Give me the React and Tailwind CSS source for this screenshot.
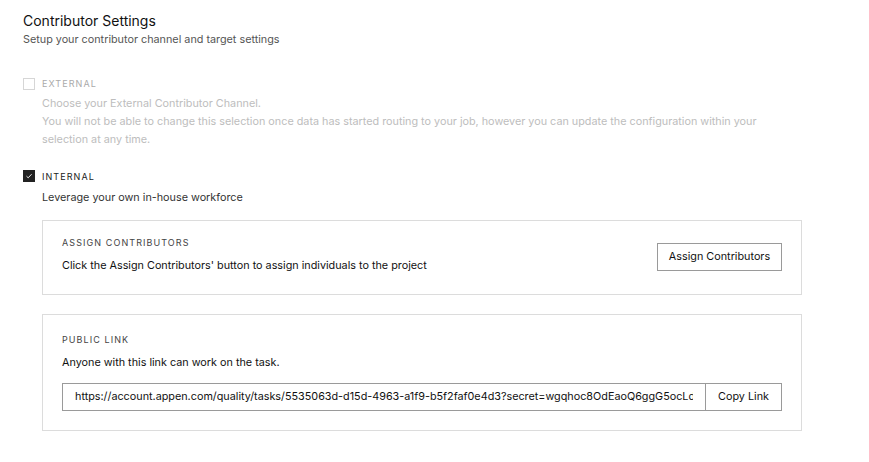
import React from "react";

const url =
  "https://account.appen.com/quality/tasks/5535063d-d15d-4963-a1f9-b5f2faf0e4d3?secret=wgqhoc8OdEaoQ6ggG5ocLdTq2";

function Check({ checked }) {
  if (checked) {
    return (
      <span className="flex h-3 w-3 items-center justify-center bg-[#222]">
        <svg width="8" height="8" viewBox="0 0 8 8" fill="none">
          <path d="M1.5 4.2 3.2 5.8 6.6 2.2" stroke="#fff" strokeWidth="0.9" />
        </svg>
      </span>
    );
  }
  return <span className="h-3 w-3 border border-[#d6d6d6] bg-white" />;
}

export default function App() {
  return (
    <div className="min-h-[462px] bg-white px-[23px] pt-[12px] font-['Inter',sans-serif] text-[#222]">
      <h1 className="text-[14px] leading-[18px] text-[#111]">Contributor Settings</h1>
      <p className="mt-[2px] text-[10.8px] leading-[16px] text-[#555]">
        Setup your contributor channel and target settings
      </p>

      {/* External */}
      <div className="mt-[29px] flex items-center gap-[7px]">
        <Check checked={false} />
        <span className="text-[9px] tracking-[0.12em] text-[#aaa]">EXTERNAL</span>
      </div>
      <div className="mt-[4px] pl-[19px] text-[10.8px] leading-[18px] text-[#bdbdbd]">
        <p>Choose your External Contributor Channel.</p>
        <p className="max-w-[740px]">
          You will not be able to change this selection once data has started routing to your job, however you can update the configuration within your selection at any time.
        </p>
      </div>

      {/* Internal */}
      <div className="mt-[21px] flex items-center gap-[7px]">
        <Check checked />
        <span className="text-[9px] tracking-[0.12em] text-[#222]">INTERNAL</span>
      </div>
      <div className="pl-[19px]">
        <p className="mt-[6px] text-[10.8px] leading-[18px] text-[#333]">
          Leverage your own in-house workforce
        </p>

        <div className="mt-[13px] flex w-[760px] items-center justify-between border border-[#dcdcdc] px-[19px] pt-[15px] pb-[20px]">
          <div>
            <div className="text-[9px] tracking-[0.12em] text-[#444]">ASSIGN CONTRIBUTORS</div>
            <div className="mt-[8px] text-[10.8px] leading-[16px] text-[#111]">
              Click the Assign Contributors' button to assign individuals to the project
            </div>
          </div>
          <button className="mt-[4px] h-[28px] w-[125px] border border-[#9a9a9a] text-[10.8px] text-[#111]">
            Assign Contributors
          </button>
        </div>

        <div className="mt-[19px] w-[760px] border border-[#dcdcdc] px-[19px] pt-[18px] pb-[19px]">
          <div className="text-[9px] tracking-[0.12em] text-[#444]">PUBLIC LINK</div>
          <div className="mt-[9px] text-[10.8px] leading-[16px] text-[#111]">
            Anyone with this link can work on the task.
          </div>
          <div className="mt-[12px] flex h-[28px] border border-[#9a9a9a]">
            <input
              readOnly
              value={url}
              className="min-w-0 flex-1 bg-white px-[12px] text-[10.8px] text-[#111] outline-none"
            />
            <button className="w-[76px] shrink-0 border-l border-[#9a9a9a] text-[10.8px] text-[#111]">
              Copy Link
            </button>
          </div>
        </div>
      </div>
    </div>
  );
}
